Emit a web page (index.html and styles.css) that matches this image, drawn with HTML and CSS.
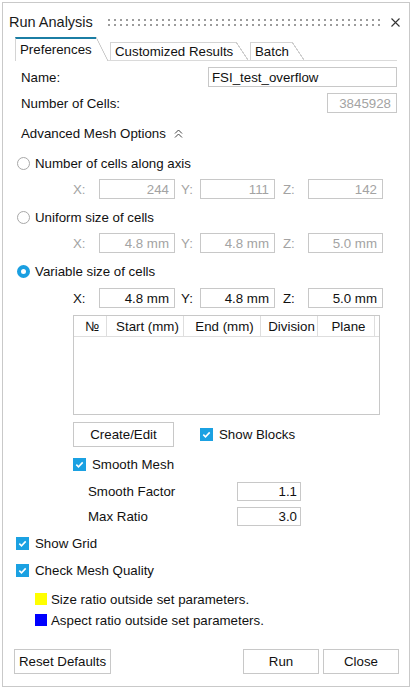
FILE: index.html
```html
<!DOCTYPE html>
<html>
<head>
<meta charset="utf-8">
<link rel="stylesheet" href="styles.css">
</head>
<body>
<div class="window">
  <div class="titlebar">
    <span class="title">Run Analysis</span>
    <span class="grip"></span>
    <svg class="close" width="9" height="9" viewBox="0 0 9 9"><path d="M0.5 0.5 L8.5 8.5 M8.5 0.5 L0.5 8.5" stroke="#333" stroke-width="1.1" fill="none"/></svg>
  </div>
  <div class="tabs">
    <div class="tab active tab-pref">Preferences</div>
    <div class="tab tab-cust">Customized Results</div>
    <div class="tab tab-batch">Batch</div>
  </div>
  <div class="panel">
    <div class="row row-name">
      <span class="label">Name:</span>
      <div class="field name-field">FSI_test_overflow</div>
    </div>
    <div class="row row-cells">
      <span class="label">Number of Cells:</span>
      <div class="field cells-field disabled">3845928</div>
    </div>
    <div class="row row-adv">
      <span class="label">Advanced Mesh Options</span>
      <svg class="chev" width="9" height="9" viewBox="0 0 9 9"><path d="M1 4.5 L4.5 1 L8 4.5 M1 8.5 L4.5 5 L8 8.5" stroke="#444" stroke-width="1" fill="none"/></svg>
    </div>
    <div class="row row-r1">
      <span class="radio"></span><span class="opt">Number of cells along axis</span>
    </div>
    <div class="row xyz xyz1 disabled">
      <span class="axis ax-x">X:</span><div class="field num fx">244</div>
      <span class="axis ax-y">Y:</span><div class="field num fy">111</div>
      <span class="axis ax-z">Z:</span><div class="field num fz">142</div>
    </div>
    <div class="row row-r2">
      <span class="radio"></span><span class="opt">Uniform size of cells</span>
    </div>
    <div class="row xyz xyz2 disabled">
      <span class="axis ax-x">X:</span><div class="field num fx">4.8 mm</div>
      <span class="axis ax-y">Y:</span><div class="field num fy">4.8 mm</div>
      <span class="axis ax-z">Z:</span><div class="field num fz">5.0 mm</div>
    </div>
    <div class="row row-r3">
      <span class="radio checked"></span><span class="opt">Variable size of cells</span>
    </div>
    <div class="row xyz xyz3">
      <span class="axis ax-x">X:</span><div class="field num fx">4.8 mm</div>
      <span class="axis ax-y">Y:</span><div class="field num fy">4.8 mm</div>
      <span class="axis ax-z">Z:</span><div class="field num fz">5.0 mm</div>
    </div>
    <div class="grid-table">
      <div class="thead">
        <div class="th c1">№</div>
        <div class="th c2">Start (mm)</div>
        <div class="th c3">End (mm)</div>
        <div class="th c4">Division</div>
        <div class="th c5">Plane</div>
      </div>
    </div>
    <div class="row row-create">
      <div class="btn btn-create">Create/Edit</div>
      <span class="checkbox cb-blocks"><svg width="13" height="13" viewBox="0 0 13 13"><path d="M3.3 6.7 L5.5 8.8 L9.7 4.4" stroke="#fff" stroke-width="1.6" fill="none"/></svg></span>
      <span class="opt">Show Blocks</span>
    </div>
    <div class="row row-smooth">
      <span class="checkbox cb-smooth"><svg width="13" height="13" viewBox="0 0 13 13"><path d="M3.3 6.7 L5.5 8.8 L9.7 4.4" stroke="#fff" stroke-width="1.6" fill="none"/></svg></span>
      <span class="opt">Smooth Mesh</span>
    </div>
    <div class="row row-sf">
      <span class="sublabel">Smooth Factor</span>
      <div class="field small-field">1.1</div>
    </div>
    <div class="row row-mr">
      <span class="sublabel">Max Ratio</span>
      <div class="field small-field">3.0</div>
    </div>
    <div class="row row-grid">
      <span class="checkbox cb-main"><svg width="13" height="13" viewBox="0 0 13 13"><path d="M3.3 6.7 L5.5 8.8 L9.7 4.4" stroke="#fff" stroke-width="1.6" fill="none"/></svg></span>
      <span class="opt">Show Grid</span>
    </div>
    <div class="row row-quality">
      <span class="checkbox cb-main"><svg width="13" height="13" viewBox="0 0 13 13"><path d="M3.3 6.7 L5.5 8.8 L9.7 4.4" stroke="#fff" stroke-width="1.6" fill="none"/></svg></span>
      <span class="opt">Check Mesh Quality</span>
    </div>
    <div class="legend legend-size">
      <span class="swatch yellow"></span><span class="legend-text">Size ratio outside set parameters.</span>
    </div>
    <div class="legend legend-aspect">
      <span class="swatch blue"></span><span class="legend-text">Aspect ratio outside set parameters.</span>
    </div>
    <div class="footer">
      <div class="btn btn-reset">Reset Defaults</div>
      <div class="spacer"></div>
      <div class="btn btn-run">Run</div>
      <div class="btn btn-close">Close</div>
    </div>
  </div>
</div>
</body>
</html>
```
FILE: styles.css
```css
* { box-sizing: border-box; }
html, body { margin: 0; padding: 0; background: #fff; }
body {
  font-family: "Liberation Sans", Arial, sans-serif;
  font-size: 13.3px;
  color: #111;
}
.window {
  margin: 2px 0 0 2px;
  width: 408px;
  height: 685px;
  border: 1px solid #c9c9c9;
  display: flex;
  flex-direction: column;
}
.titlebar {
  height: 34px;
  padding: 4px 9px 0 6px;
  display: flex;
  align-items: center;
  flex: none;
}
.title { font-size: 14.5px; color: #1a1a1a; }
.grip {
  flex: 1;
  height: 7px;
  margin: 0 9px 0 15px;
  background-image: radial-gradient(circle at 1px 1px, #9c9c9c 0.85px, transparent 1.15px);
  background-size: 6px 5px;
}
.close { display: block; flex: none; }

.tabs {
  flex: none;
  height: 24px;
  margin: 0 12px 0 12px;
  border-bottom: 1px solid #dadada;
  display: flex;
  align-items: flex-end;
}
.tab {
  position: relative;
  height: 18px;
  border-left: 1px solid #d4d4d4;
  border-top: 1px solid #d4d4d4;
  padding-left: 4px;
  margin-right: 14px;
  display: flex;
  align-items: center;
  background: #fff;
  white-space: nowrap;
}
.tab::after {
  content: "";
  position: absolute;
  top: -1px;
  bottom: 0;
  right: -12px;
  width: 12px;
  background: linear-gradient(to top right, #fff calc(50% - 0.7px), #cfcfcf calc(50% - 0.5px), #cfcfcf calc(50% + 0.5px), rgba(255,255,255,0) calc(50% + 0.7px));
}
.tab.active {
  height: 24px;
  margin-bottom: -1px;
  border-top: 2px solid #1b7ea4;
  padding-bottom: 2px;
}
.tab.active::after { top: -2px; }
.tab-pref { width: 81px; }
.tab-cust { width: 126px; }
.tab-batch { width: 42px; }

.panel {
  flex: 1;
  display: flex;
  flex-direction: column;
}
.row {
  display: flex;
  align-items: center;
  height: 20px;
  flex: none;
}
.label { margin-left: 18px; }
.field {
  height: 20px;
  border: 1px solid #c8c8c8;
  display: flex;
  align-items: center;
  padding: 0 5px 0 3px;
  white-space: nowrap;
  background: #fff;
}
.disabled, .disabled .field { color: #a3a3a3; }
.name-field { margin-left: auto; margin-right: 12px; width: 189px; }
.cells-field { margin-left: auto; margin-right: 12px; width: 70px; justify-content: flex-end; }

.row-name { margin-top: 6px; }
.row-cells { margin-top: 6px; }
.row-adv { margin-top: 10px; }
.chev { margin-left: 8px; display: block; }
.row-r1 { margin-top: 10px; }
.xyz1 { margin-top: 6px; }
.row-r2 { margin-top: 8px; }
.xyz2 { margin-top: 6px; }
.row-r3 { margin-top: 8px; }
.xyz3 { margin-top: 7px; }

.radio {
  width: 13px;
  height: 13px;
  border-radius: 50%;
  border: 1px solid #a8a8a8;
  margin-left: 14px;
  margin-right: 5px;
  flex: none;
  background: #fff;
}
.radio.checked { border: 4px solid #1a9fe1; }

.xyz { padding-left: 70px; }
.axis { flex: none; }
.ax-x { width: 26px; }
.ax-y { width: 19px; margin-left: 6px; }
.ax-z { width: 25px; margin-left: 8px; }
.num { justify-content: flex-end; padding-right: 5px; }
.fx { width: 76px; }
.fy { width: 75px; }
.fz { width: 75px; }

.grid-table {
  flex: none;
  margin: 7px 0 0 70px;
  width: 307px;
  height: 100px;
  border: 1px solid #c8c8c8;
}
.thead {
  display: flex;
  height: 21px;
  border-bottom: 1px solid #dedede;
}
.th {
  border-right: 1px solid #dedede;
  display: flex;
  align-items: center;
  justify-content: center;
  padding-left: 5px;
  white-space: nowrap;
  flex: none;
}
.c1 { width: 33px; }
.c2 { width: 77px; }
.c3 { width: 77px; }
.c4 { width: 57px; }
.c5 { width: 57px; }

.btn {
  height: 25px;
  border: 1px solid #c8c8c8;
  background: #fff;
  display: flex;
  align-items: center;
  justify-content: center;
  flex: none;
  white-space: nowrap;
}
.row-create { margin-top: 7px; height: 25px; }
.btn-create { margin-left: 70px; width: 101px; }
.checkbox {
  width: 13px;
  height: 13px;
  background: #1ba1e2;
  flex: none;
  display: block;
}
.checkbox svg { display: block; }
.cb-blocks { margin-left: 26px; margin-right: 6px; }
.row-smooth { margin-top: 7px; }
.cb-smooth { margin-left: 70px; margin-right: 6px; }
.sublabel { margin-left: 85px; width: 149px; flex: none; }
.small-field { width: 64px; height: 19px; justify-content: flex-end; padding-right: 3px; }
.row-sf { margin-top: 8px; height: 19px; }
.row-mr { margin-top: 6px; height: 19px; }
.row-grid { margin-top: 7px; }
.row-quality { margin-top: 7px; }
.cb-main { margin-left: 13px; margin-right: 6px; }

.legend {
  display: flex;
  align-items: center;
  height: 14px;
  flex: none;
}
.legend-size { margin-top: 12px; }
.legend-aspect { margin-top: 7px; }
.swatch { width: 12px; height: 12px; margin-left: 32px; margin-right: 4px; flex: none; }
.yellow { background: #ffff00; }
.blue { background: #0000ff; }

.footer {
  display: flex;
  margin-top: 22px;
  padding: 0 10px 0 11px;
  flex: none;
}
.spacer { flex: 1; }
.btn-reset { width: 97px; }
.btn-run { width: 76px; margin-right: 4px; }
.btn-close { width: 76px; }
```
